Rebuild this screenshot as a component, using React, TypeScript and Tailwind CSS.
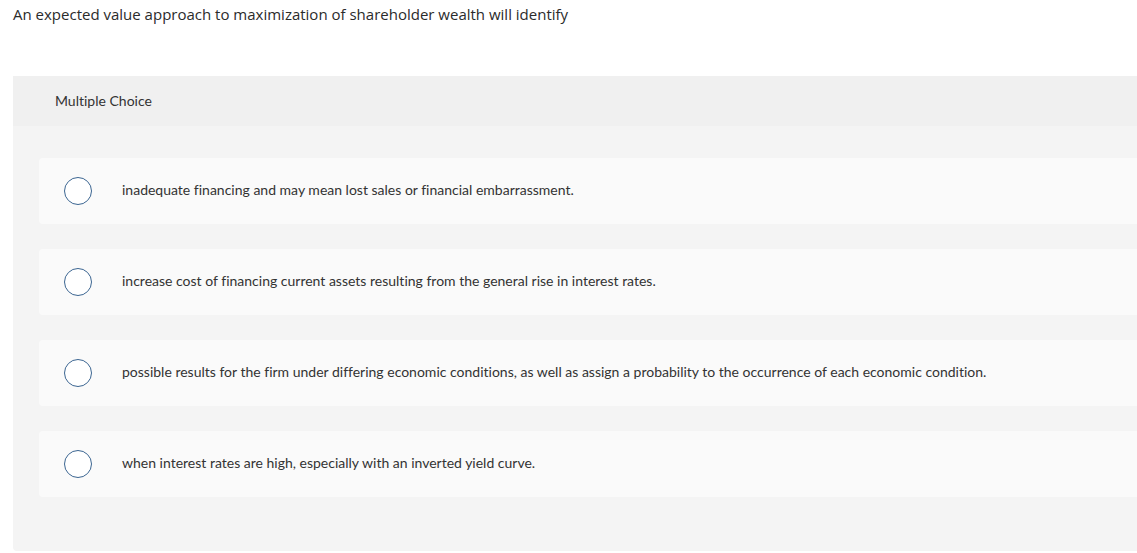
import React from "react";

const options = [
  "inadequate financing and may mean lost sales or financial embarrassment.",
  "increase cost of financing current assets resulting from the general rise in interest rates.",
  "possible results for the firm under differing economic conditions, as well as assign a probability to the occurrence of each economic condition.",
  "when interest rates are high, especially with an inverted yield curve.",
];

export default function App() {
  return (
    <div className="w-[1137px] h-[553px] overflow-hidden bg-white">
      <div
        className="pl-[13px] pt-[4px] text-[15px] leading-[20px] text-[#2b2b2b]"
        style={{ fontFamily: '"Open Sans", sans-serif' }}
      >
        An expected value approach to maximization of shareholder wealth will identify
      </div>
      <div
        className="ml-[13px] mt-[52px] w-[1140px] h-[475px] rounded-bl-[4px] bg-[#f4f4f4] overflow-hidden [font-variant-ligatures:none]"
        style={{ fontFamily: 'Lato, sans-serif' }}
      >
        <div className="h-[50px] bg-[#f0f0f0] pl-[42px] pb-[2px] flex items-center text-[14px] text-[#333]">
          Multiple Choice
        </div>
        <div className="pl-[26px] pt-[32px] flex flex-col gap-[25px]">
          {options.map((o, i) => (
            <div
              key={i}
              className="h-[66px] rounded-[4px] bg-[#fafafa] flex items-center"
            >
              <div className="ml-[25px] w-[28px] h-[28px] rounded-full border-[1.5px] border-[#3b6591] bg-white shrink-0" />
              <div className="ml-[30px] pb-[3px] text-[14px] text-[#333]">{o}</div>
            </div>
          ))}
        </div>
      </div>
    </div>
  );
}
